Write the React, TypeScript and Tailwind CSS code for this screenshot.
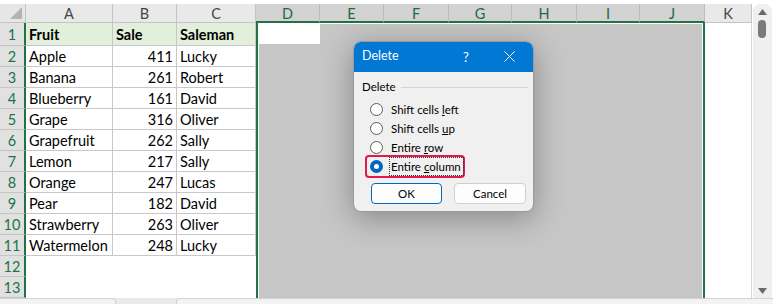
import React from "react";

const data: [string, string, string][] = [
  ["Apple", "411", "Lucky"],
  ["Banana", "261", "Robert"],
  ["Blueberry", "161", "David"],
  ["Grape", "316", "Oliver"],
  ["Grapefruit", "262", "Sally"],
  ["Lemon", "217", "Sally"],
  ["Orange", "247", "Lucas"],
  ["Pear", "182", "David"],
  ["Strawberry", "263", "Oliver"],
  ["Watermelon", "248", "Lucky"],
];

const selCols = ["D", "E", "F", "G", "H", "I", "J"];

function Radio({ checked }: { checked?: boolean }) {
  if (checked) {
    return (
      <div className="w-[13px] h-[13px] rounded-full bg-[#0067c0] flex items-center justify-center shrink-0">
        <div className="w-[5px] h-[5px] rounded-full bg-white" />
      </div>
    );
  }
  return <div className="w-[13px] h-[13px] rounded-full border border-[#5c5c5c] bg-white shrink-0" />;
}

function Dialog() {
  return (
    <div className="absolute left-[353px] top-[41px] w-[181px] h-[171px] rounded-[8px] overflow-hidden bg-[#f0f0f0] border border-[#9a9a9a] shadow-[0_6px_30px_rgba(0,0,0,0.32)] font-['Lato',sans-serif] text-[11.5px] text-black">
      <div className="h-[31px] bg-[#0078d4] flex items-center text-white relative -mx-px -mt-px">
        <span className="pl-[9px] text-[12.5px]">Delete</span>
        <span className="absolute left-[110px] top-[7px] text-[13px]">?</span>
        <svg className="absolute left-[151px] top-[10px]" width="11" height="11" viewBox="0 0 11 11">
          <path d="M0.5 0.5 L10.5 10.5 M10.5 0.5 L0.5 10.5" stroke="white" strokeWidth="1" fill="none" />
        </svg>
      </div>
      <div>
        <div className="flex items-center pl-[8px] pr-[5px] mt-[7px] h-[16px]">
          <span>Delete</span>
          <div className="flex-1 h-px bg-[#d5d5d5] ml-[5px]" />
        </div>
        <div className="flex flex-col mt-[5px] pl-[16px]">
          {[
            ["Shift cells ", "l", "eft"],
            ["Shift cells ", "u", "p"],
            ["Entire ", "r", "ow"],
          ].map(([a, u, b], i) => (
            <div key={i} className="h-[19px] flex items-center">
              <Radio />
              <span className="ml-[8px] leading-none">
                {a}
                <u>{u}</u>
                {b}
              </span>
            </div>
          ))}
          <div className="h-[23px] -my-[2px] -ml-[5px] w-[100px] rounded-[4px] border-2 border-[#e0194f] flex items-center pl-[3px]">
            <Radio checked />
            <span className="ml-[6px] leading-none border border-dotted border-[#333] pl-[1px] pr-[2px] py-[3px] whitespace-nowrap">
              Entire <u>c</u>olumn
            </span>
          </div>
        </div>
        <div className="flex mt-[7px] pl-[17px] gap-[12px]">
          <div className="w-[71px] h-[21px] rounded-[4px] border border-[#0067c0] bg-[#fdfdfd] flex items-center justify-center">
            OK
          </div>
          <div className="w-[72px] h-[21px] rounded-[4px] border border-[#cfcfcf] bg-[#fdfdfd] flex items-center justify-center">
            Cancel
          </div>
        </div>
      </div>
    </div>
  );
}

export default function App() {
  return (
    <div className="w-[773px] h-[304px] bg-white relative overflow-hidden font-['Lato',sans-serif] text-[14.5px] text-black">
      <div className="flex h-[298px]">
        <div className="w-[752px] flex flex-col">
          <div className="h-[4px] bg-white" />
          <div className="grid grid-cols-[26px_87px_64px_79px_64px_64px_65px_63px_65px_63px_65px_47px] grid-rows-[19px_23px_repeat(12,21px)]">
            {/* corner */}
            <div className="bg-[#e6e6e6] border-r border-b border-[#c4c4c4] relative">
              <svg className="absolute right-[3px] bottom-[3px]" width="12" height="12" viewBox="0 0 12 12">
                <polygon points="12,0 12,12 0,12" fill="#b4b4b4" />
              </svg>
            </div>
            {["A", "B", "C"].map((c) => (
              <div key={c} className="bg-[#e9e9e9] border-r border-b border-[#c4c4c4] flex items-center justify-center text-[#444] pt-[1px]">
                {c}
              </div>
            ))}
            {selCols.map((c) => (
              <div key={c} className="bg-[#d3d3d3] border-r border-[#bcbcbc] border-b-2 border-b-[#217346] flex items-center justify-center text-[#1f6a42] pt-[2px]">
                {c}
              </div>
            ))}
            <div className="bg-[#e9e9e9] border-r border-b border-[#c4c4c4] flex items-center justify-center text-[#444] pt-[1px]">
              K
            </div>

            {/* selection block */}
            <div className="col-start-5 col-span-7 row-start-2 row-span-13 border-l-2 border-r-2 border-[#217346] bg-[#c6c6c6]">
              <div className="h-full border-t border-l border-r border-white">
                <div className="w-[61px] h-[20px] bg-white" />
              </div>
            </div>

            {/* rows */}
            {Array.from({ length: 13 }).map((_, r) => {
              const row = r + 2;
              const isHead = r === 0;
              const d = r >= 1 && r <= 10 ? data[r - 1] : null;
              const cellBorder = r <= 10 ? "border-r border-b border-[#c8c8c8]" : "";
              const bg = isHead ? "bg-[#e2efda]" : "bg-white";
              return (
                <React.Fragment key={r}>
                  <div
                    style={{ gridRow: row }}
                    className="col-start-1 bg-[#e1e1e1] border-b border-[#c4c4c4] border-r-2 border-r-[#217346] flex items-center justify-center text-[#217346] pt-[2px]"
                  >
                    {r + 1}
                  </div>
                  <div style={{ gridRow: row }} className={`col-start-2 ${bg} ${cellBorder} flex items-center pl-[3px] pt-[2px] ${isHead ? "font-bold" : ""}`}>
                    {isHead ? "Fruit" : d ? d[0] : ""}
                  </div>
                  <div style={{ gridRow: row }} className={`col-start-3 ${bg} ${cellBorder} flex items-center ${isHead ? "justify-start pl-[3px] font-bold" : "justify-end pr-[3px]"} pt-[2px]`}>
                    {isHead ? "Sale" : d ? d[1] : ""}
                  </div>
                  <div style={{ gridRow: row }} className={`col-start-4 ${bg} ${cellBorder} flex items-center pl-[3px] pt-[2px] ${isHead ? "font-bold" : ""}`}>
                    {isHead ? "Saleman" : d ? d[2] : ""}
                  </div>
                  <div style={{ gridRow: row }} className="col-start-12 bg-white border-r border-[#d8d8d8]" />
                </React.Fragment>
              );
            })}
          </div>
        </div>
        {/* scrollbar */}
        <div className="w-[21px] bg-white pt-[4px] flex">
          <div className="flex-1 ml-[1px] mr-[1px] rounded-t-[8px] bg-[#efefef] relative">
            <svg className="absolute left-[5px] top-[5px]" width="9" height="6" viewBox="0 0 9 6">
              <polygon points="4.5,0 9,6 0,6" fill="#6b6b6b" />
            </svg>
            <div className="absolute left-[5px] top-[16px] w-[8px] h-[18px] rounded-full bg-[#7a7a7a]" />
            <svg className="absolute left-[5px] top-[284px]" width="9" height="6" viewBox="0 0 9 6">
              <polygon points="0,0 9,0 4.5,6" fill="#6b6b6b" />
            </svg>
          </div>
        </div>
      </div>
      {/* bottom bar */}
      <div className="h-[6px] bg-[#e9e9e9] flex">
        <div className="w-[116px] bg-[#f3f3f3] border-t border-r border-[#d2d2d2] rounded-tr-[4px]" />
        <div className="w-[60px]" />
        <div className="flex-1 bg-[#f3f3f3] border-t border-l border-[#d2d2d2] rounded-tl-[4px]" />
      </div>
      <Dialog />
    </div>
  );
}
